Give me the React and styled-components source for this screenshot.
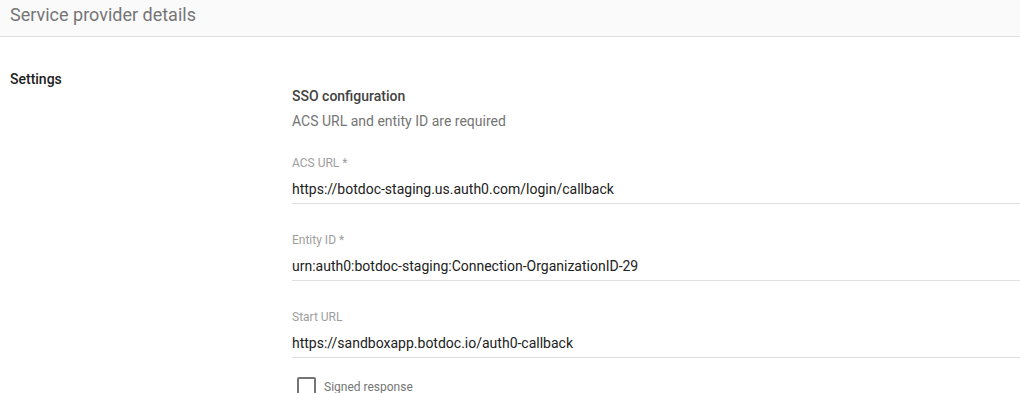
import React from 'react'
import styled, { createGlobalStyle } from 'styled-components'

const GlobalStyle = createGlobalStyle`
  body {
    margin: 0;
    background: #fff;
    font-family: Roboto, "Liberation Sans", sans-serif;
  }
  * { box-sizing: border-box; }
`

const fields = [
  { label: 'ACS URL *', value: 'https://botdoc-staging.us.auth0.com/login/callback' },
  { label: 'Entity ID *', value: 'urn:auth0:botdoc-staging:Connection-OrganizationID-29' },
  { label: 'Start URL', value: 'https://sandboxapp.botdoc.io/auth0-callback' },
]

const App = () => {
  return (
    <Page>
      <GlobalStyle />
      <Header>
        <Title>Service provider details</Title>
      </Header>
      <Body>
        <SectionName>Settings</SectionName>
        <Form>
          <FormTitle>SSO configuration</FormTitle>
          <FormHint>ACS URL and entity ID are required</FormHint>
          {fields.map((f, i) => (
            <Field key={f.label} $first={i === 0}>
              <Label>{f.label}</Label>
              <Value>{f.value}</Value>
            </Field>
          ))}
          <CheckRow>
            <Box />
            <CheckLabel>Signed response</CheckLabel>
          </CheckRow>
        </Form>
      </Body>
    </Page>
  )
}

export default App

const Page = styled.div`
  width: 1020px;
  height: 393px;
  overflow: hidden;
`

const Header = styled.div`
  height: 37px;
  background: #fafafa;
  border-bottom: 1px solid #e0e0e0;
  display: flex;
  align-items: center;
  padding: 0 10px 7px;
`

const Title = styled.h1`
  margin: 0;
  font-size: 18px;
  font-weight: 400;
  color: #757575;
`

const Body = styled.div`
  display: grid;
  grid-template-columns: 282px 1fr;
  padding: 33px 0 0 10px;
`

const SectionName = styled.div`
  font-size: 14px;
  font-weight: 500;
  color: #212121;
  line-height: 18px;
`

const Form = styled.div`
  display: flex;
  flex-direction: column;
  padding-top: 17px;
`

const FormTitle = styled.div`
  font-size: 14px;
  font-weight: 500;
  color: #424242;
  line-height: 18px;
`

const FormHint = styled.div`
  font-size: 14px;
  color: #757575;
  line-height: 18px;
  margin-top: 7px;
`

const Field = styled.div`
  display: flex;
  flex-direction: column;
  border-bottom: 1px solid #e0e0e0;
  margin-top: ${p => (p.$first ? '25px' : '28px')};
  padding-bottom: 5px;
`

const Label = styled.div`
  font-size: 12px;
  color: #9e9e9e;
  line-height: 16px;
`

const Value = styled.div`
  font-size: 14px;
  color: #212121;
  line-height: 18px;
  margin-top: 9px;
`

const CheckRow = styled.div`
  display: flex;
  align-items: center;
  gap: 8px;
  margin: 19px 0 0 5px;
`

const Box = styled.span`
  width: 19px;
  height: 19px;
  border: 2px solid #757575;
  border-radius: 2px;
`

const CheckLabel = styled.span`
  font-size: 12px;
  color: #757575;
`
